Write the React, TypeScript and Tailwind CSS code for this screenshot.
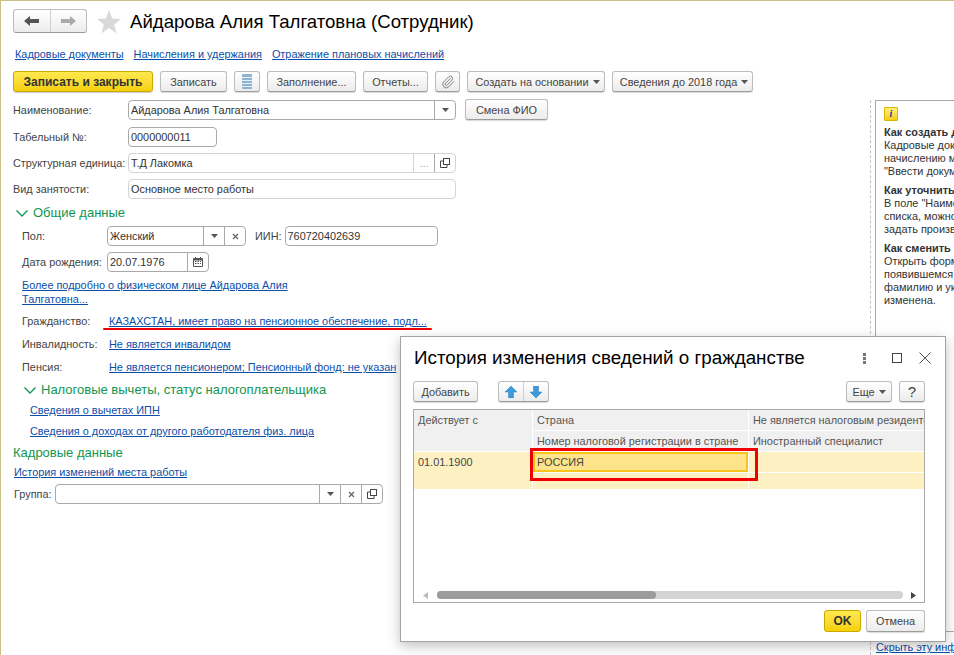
import React from "react";
import { Paperclip } from "lucide-react";

const Caret = () => (
  <svg width="7" height="4" viewBox="0 0 7 4" className="shrink-0"><path d="M0 0h7L3.5 4z" fill="#555" /></svg>
);

const Btn = ({ children, className = "" }: { children: React.ReactNode; className?: string }) => (
  <div className={`flex h-[21px] items-center justify-center gap-[4px] rounded-[3px] border border-[#bdbdbd] border-b-[#9c9c9c] bg-linear-to-b from-white to-[#ececec] text-[#444] shadow-[0_1px_1px_rgba(0,0,0,0.15)] whitespace-nowrap ${className}`}>
    {children}
  </div>
);

const A = ({ children, className = "" }: { children: React.ReactNode; className?: string }) => (
  <a className={`text-[#0b4ea8] underline underline-offset-1 whitespace-nowrap ${className}`}>{children}</a>
);

const OpenIcon = () => (
  <svg width="10" height="10" viewBox="0 0 10 10" fill="none" stroke="#444"><rect x="3.5" y=".5" width="6" height="6" fill="#fff" /><path d="M3.5 3H.5v6.5H7V6.5" /></svg>
);
const ClearIcon = () => (
  <svg width="7" height="7" viewBox="0 0 7 7" stroke="#666" strokeWidth="1.3"><path d="M1 1l5 5M6 1L1 6" /></svg>
);
const Cell = ({ children, w = "w-[21px]" }: { children: React.ReactNode; w?: string }) => (
  <div className={`flex h-full ${w} items-center justify-center border-l border-[#a9a9a9]`}>{children}</div>
);

const Field = ({ children, className = "", light = false, text }: { children?: React.ReactNode; className?: string; light?: boolean; text?: string }) => (
  <div className={`flex h-[20px] items-center rounded-[4px] border ${light ? "border-[#d4d4d4]" : "border-[#a9a9a9]"} bg-white text-[#333] ${className}`}>
    <span className="flex-1 overflow-hidden whitespace-nowrap pl-[2px]">{text}</span>
    {children}
  </div>
);

const Row = ({ label, lw, children, className = "" }: { label: string; lw: string; children: React.ReactNode; className?: string }) => (
  <div className={`flex items-center ${className}`}>
    <span className={`${lw} shrink-0 whitespace-nowrap text-[#444]`}>{label}</span>
    {children}
  </div>
);

const Chevron = () => (
  <svg width="12" height="7" viewBox="0 0 12 7" fill="none" stroke="#0f9652" strokeWidth="1.3" className="shrink-0"><path d="M.5.5L6 6l5.5-5.5" /></svg>
);

const Arrow = ({ dir, color }: { dir: "left" | "right"; color: string }) => (
  <svg width="16" height="12" viewBox="0 0 16 12" fill={color}>
    {dir === "left" ? <path d="M0 6l6-5v3h9v4H6v3z" /> : <path d="M16 6l-6-5v3H1v4h9v3z" />}
  </svg>
);

const BlueArrow = ({ up }: { up?: boolean }) => (
  <svg width="12" height="12" viewBox="0 0 12 12">
    <path d={up ? "M6 0l6 6H8.5v6h-5V6H0z" : "M6 12l6-6H8.5V0h-5v6H0z"} fill="#3d9bdc" stroke="#2a7fbd" strokeWidth=".5" />
  </svg>
);

const panelText = (
  <div className="flex flex-col whitespace-nowrap text-[10.9px] text-[#333]">
    <b className="mt-[4px] leading-[14px]">Как создать документы</b>
    <span className="leading-[13px]">Кадровые документы</span>
    <span className="leading-[13px]">начислению может быть</span>
    <span className="leading-[13px]">"Ввести документ"</span>
    <b className="mt-[5px] leading-[14px]">Как уточнить наименование</b>
    <span className="leading-[13px]">В поле "Наименование"</span>
    <span className="leading-[13px]">списка, можно выбрать</span>
    <span className="leading-[13px]">задать произвольное</span>
    <b className="mt-[5px] leading-[14px]">Как сменить фамилию</b>
    <span className="leading-[13px]">Открыть форму</span>
    <span className="leading-[13px]">появившемся диалоге</span>
    <span className="leading-[13px]">фамилию и указать</span>
    <span className="leading-[13px]">изменена.</span>
  </div>
);

const Th = ({ children, className = "" }: { children?: React.ReactNode; className?: string }) => (
  <div className={`overflow-hidden whitespace-nowrap bg-[#f0f0f0] pl-[4px] text-[#555] ${className}`}>{children}</div>
);

export default function App() {
  return (
    <div className="relative flex h-[655px] w-[954px] overflow-hidden border-t border-l border-[#c9c08a] bg-white text-[10.9px] leading-[14px] [font-family:'Liberation_Sans',Arial,sans-serif]">
      <main className="flex w-[869px] shrink-0 flex-col pl-[12px]">
        {/* header */}
        <header className="flex h-[35px] items-start pt-[8px]">
          <div className="flex h-[24px] w-[74px] rounded-[3px] border border-[#bdbdbd] border-b-[#999] bg-linear-to-b from-white to-[#ececec]">
            <div className="flex flex-1 items-center justify-center border-r border-[#cfcfcf]"><Arrow dir="left" color="#555" /></div>
            <div className="flex flex-1 items-center justify-center"><Arrow dir="right" color="#aaa" /></div>
          </div>
          <svg width="24" height="24" viewBox="0 0 24 24" className="ml-[10px] mt-[1px]"><path d="M12 0l3.2 8.5 8.8.4-6.9 5.6 2.4 8.8L12 18l-7.5 5.3 2.4-8.8L0 8.9l8.8-.4z" fill="#d9d9d9" /></svg>
          <h1 className="ml-[9px] mt-[1px] whitespace-nowrap text-[18.6px] font-medium leading-[24px] text-black">Айдарова Алия Талгатовна (Сотрудник)</h1>
        </header>

        <nav className="mt-[11px] flex gap-[10px] pl-[2px]">
          <A>Кадровые документы</A>
          <A>Начисления и удержания</A>
          <A>Отражение плановых начислений</A>
        </nav>

        {/* toolbar */}
        <div className="mt-[10px] flex gap-[7px]">
          <div className="flex h-[21px] w-[140px] items-center justify-center rounded-[3px] border border-[#c9a800] bg-linear-to-b from-[#ffe94d] to-[#f5d000] text-[12px] font-bold text-[#333] shadow-[0_1px_1px_rgba(0,0,0,0.2)]">Записать и закрыть</div>
          <Btn className="w-[67px]">Записать</Btn>
          <Btn className="w-[26px]">
            <svg width="10" height="15" viewBox="0 0 10 15"><rect width="10" height="15" rx="1" fill="#8fb4cf" /><path d="M0 3.5h10M0 6.5h10M0 9.5h10M0 12.5h10" stroke="#e6f0f6" /></svg>
          </Btn>
          <Btn className="w-[89px]">Заполнение...</Btn>
          <Btn className="w-[65px]">Отчеты...</Btn>
          <Btn className="w-[25px]"><Paperclip size={14} strokeWidth={1.6} className="text-[#777]" /></Btn>
          <Btn className="w-[138px] pl-[3px]">Создать на основании <Caret /></Btn>
          <Btn className="w-[141px] pl-[3px]">Сведения до 2018 года <Caret /></Btn>
        </div>

        {/* form */}
        <Row label="Наименование:" lw="w-[115px]" className="mt-[7px]">
          <Field text="Айдарова Алия Талгатовна" className="w-[328px]">
            <Cell><Caret /></Cell>
          </Field>
          <Btn className="ml-[9px] w-[83px]">Смена ФИО</Btn>
        </Row>
        <Row label="Табельный №:" lw="w-[115px]" className="mt-[7px]">
          <Field text="0000000011" className="w-[89px]" />
        </Row>
        <Row label="Структурная единица:" lw="w-[115px]" className="mt-[6px]">
          <Field text="Т.Д Лакомка" light className="w-[328px]">
            <div className="flex h-full w-[21px] items-center justify-center border-l border-[#d4d4d4] text-[#aaa]">...</div>
            <Cell><OpenIcon /></Cell>
          </Field>
        </Row>
        <Row label="Вид занятости:" lw="w-[115px]" className="mt-[6px]">
          <Field text="Основное место работы" light className="w-[328px]" />
        </Row>

        <div className="mt-[6px] flex items-center gap-[5px] pl-[3px] text-[13px] leading-[16px] text-[#0f9652]">
          <Chevron /><span>Общие данные</span>
        </div>

        <Row label="Пол:" lw="w-[85px]" className="mt-[5px] pl-[9px]">
          <Field text="Женский" className="w-[139px]">
            <Cell><Caret /></Cell>
            <Cell><ClearIcon /></Cell>
          </Field>
          <span className="ml-[9px] text-[#444]">ИИН:</span>
          <Field text="760720402639" className="ml-[3px] w-[153px]" />
        </Row>
        <Row label="Дата рождения:" lw="w-[85px]" className="mt-[6px] pl-[9px]">
          <Field text="20.07.1976" className="w-[102px]">
            <Cell>
              <svg width="10" height="10" viewBox="0 0 10 10"><rect y="1" width="10" height="9" rx="1" fill="#555" /><rect x="1" y="3.5" width="8" height="5.5" fill="#fff" /><path d="M2 4.5h1.5M4.5 4.5H6M7 4.5h1M2 6.5h1.5M4.5 6.5H6M7 6.5h1" stroke="#555" /><path d="M2.5 0v2M7.5 0v2" stroke="#555" /></svg>
            </Cell>
          </Field>
        </Row>

        <div className="mt-[6px] w-[300px] pl-[9px] leading-[14px]">
          <A className="block">Более подробно о физическом лице Айдарова Алия</A>
          <A className="block">Талгатовна...</A>
        </div>

        <Row label="Гражданство:" lw="w-[87px]" className="mt-[8px] pl-[9px]">
          <A>КАЗАХСТАН, имеет право на пенсионное обеспечение, подл...</A>
        </Row>
        <Row label="Инвалидность:" lw="w-[87px]" className="mt-[9px] pl-[9px]">
          <A>Не является инвалидом</A>
        </Row>
        <Row label="Пенсия:" lw="w-[87px]" className="mt-[9px] pl-[9px]">
          <A>Не является пенсионером; Пенсионный фонд: не указан</A>
        </Row>

        <div className="mt-[8px] flex items-center gap-[5px] pl-[11px] text-[13px] leading-[16px] text-[#0f9652]">
          <Chevron /><span>Налоговые вычеты, статус налогоплательщика</span>
        </div>
        <A className="mt-[5px] ml-[17px] self-start">Сведения о вычетах ИПН</A>
        <A className="mt-[7px] ml-[17px] self-start">Сведения о доходах от другого работодателя физ. лица</A>

        <div className="mt-[7px] text-[13px] leading-[16px] text-[#0f9652]">Кадровые данные</div>
        <A className="mt-[4px] ml-[1px] self-start">История изменений места работы</A>

        <Row label="Группа:" lw="w-[41px]" className="mt-[5px] pl-[1px]">
          <Field className="w-[328px]">
            <Cell><Caret /></Cell>
            <Cell><ClearIcon /></Cell>
            <Cell><OpenIcon /></Cell>
          </Field>
        </Row>
      </main>

      {/* right info panel */}
      <aside className="mt-[99px] flex h-[555px] flex-1 flex-col border-l border-dashed border-[#c4c4c4] pl-[4px]">
        <div className="h-[532px] overflow-hidden border-t border-l border-b border-[#a9a9a9] pl-[8px] pt-[6px]">
          <div className="flex h-[14px] w-[14px] items-center justify-center rounded-[1px] border border-[#d9b400] bg-linear-to-b from-[#fff176] to-[#f5cd00] text-[10px] font-bold italic leading-none text-[#1c3d8f] [font-family:'Liberation_Serif',serif]">i</div>
          {panelText}
        </div>
        <A className="ml-[1px] mt-[8px] overflow-hidden">Скрыть эту информацию</A>
      </aside>

      {/* red underline */}
      <div className="absolute left-[102px] top-[327px] h-[2px] w-[329px] rounded-full bg-[#f00000]" />

      {/* dialog */}
      <section className="absolute left-[399px] top-[335px] flex h-[306px] w-[546px] flex-col border border-[#a3a3a3] bg-white pl-[12px] pr-[20px] shadow-[0_4px_12px_rgba(0,0,0,0.25)]">
        <div className="flex h-[44px] items-center pb-[2px]">
          <h2 className="ml-[1px] flex-1 whitespace-nowrap text-[18.8px] font-medium leading-[24px] text-black">История изменения сведений о гражданстве</h2>
          <svg width="3" height="11" viewBox="0 0 3 11" fill="#777" className="mr-[26px]"><rect width="3" height="3" /><rect y="4" width="3" height="3" /><rect y="8" width="3" height="3" /></svg>
          <svg width="10" height="10" viewBox="0 0 10 10" fill="none" stroke="#444" className="mr-[17px]"><rect x=".5" y=".5" width="9" height="9" /></svg>
          <svg width="12" height="12" viewBox="0 0 12 12" fill="none" stroke="#555" className="mr-[-6px]"><path d="M.5.5l11 11M11.5.5l-11 11" /></svg>
        </div>

        <div className="flex items-center">
          <Btn className="w-[65px]">Добавить</Btn>
          <div className="ml-[20px] flex h-[21px] w-[51px] rounded-[3px] border border-[#bdbdbd] border-b-[#9c9c9c] bg-linear-to-b from-white to-[#ececec] shadow-[0_1px_1px_rgba(0,0,0,0.15)]">
            <div className="flex flex-1 items-center justify-center border-r border-[#cfcfcf]"><BlueArrow up /></div>
            <div className="flex flex-1 items-center justify-center"><BlueArrow /></div>
          </div>
          <div className="flex-1" />
          <Btn className="w-[46px]">Еще <Caret /></Btn>
          <Btn className="ml-[7px] w-[26px] text-[15px] text-[#333]">?</Btn>
        </div>

        <div className="mt-[7px] flex h-[194px] flex-col border border-[#a9a9a9]">
          <div className="grid grid-cols-[118px_215px_1fr] grid-rows-[20px_20px_37px] gap-px overflow-hidden bg-white">
            <Th className="row-span-2 pt-[3px]">Действует с</Th>
            <Th className="pt-[3px]">Страна</Th>
            <Th className="pt-[3px]">Не является налоговым резидентом</Th>
            <Th className="pt-[3px]">Номер налоговой регистрации в стране</Th>
            <Th className="pt-[3px]">Иностранный специалист</Th>
            <div className="bg-[#fdf1c4] pl-[4px] pt-[3px] text-[#444]">01.01.1900</div>
            <div className="flex flex-col gap-px bg-white">
              <div className="h-[20px] border-2 border-[#f9c51d] bg-[#fde48a] pl-[2px] pt-[1px] text-[#444]">РОССИЯ</div>
              <div className="flex-1 bg-[#fdf1c4]" />
            </div>
            <div className="flex flex-col gap-px bg-white">
              <div className="h-[20px] bg-[#fdf1c4]" />
              <div className="flex-1 bg-[#fdf1c4]" />
            </div>
          </div>
          <div className="flex-1" />
          <div className="mb-[3px] flex h-[8px] items-center">
            <svg width="5" height="7" viewBox="0 0 5 7" className="ml-[9px]"><path d="M5 0v7L0 3.5z" fill="#bbb" /></svg>
            <div className="ml-[9px] h-[8px] flex-1 rounded-full bg-[#d4d4d4]">
              <div className="h-full w-[219px] rounded-full bg-[#9c9c9c]" />
            </div>
            <svg width="5" height="7" viewBox="0 0 5 7" className="mx-[8px]"><path d="M0 0v7l5-3.5z" fill="#444" /></svg>
          </div>
        </div>

        <div className="mt-[7px] flex justify-end gap-[5px]">
          <div className="flex h-[22px] w-[37px] items-center justify-center rounded-[3px] border border-[#c9a800] bg-linear-to-b from-[#ffe94d] to-[#f5d000] text-[12px] font-bold text-[#333]">OK</div>
          <Btn className="h-[22px] w-[59px]">Отмена</Btn>
        </div>
      </section>

      {/* red highlight */}
      <div className="absolute left-[529px] top-[447px] h-[33px] w-[228px] border-[3px] border-[#f00000]" />
    </div>
  );
}
